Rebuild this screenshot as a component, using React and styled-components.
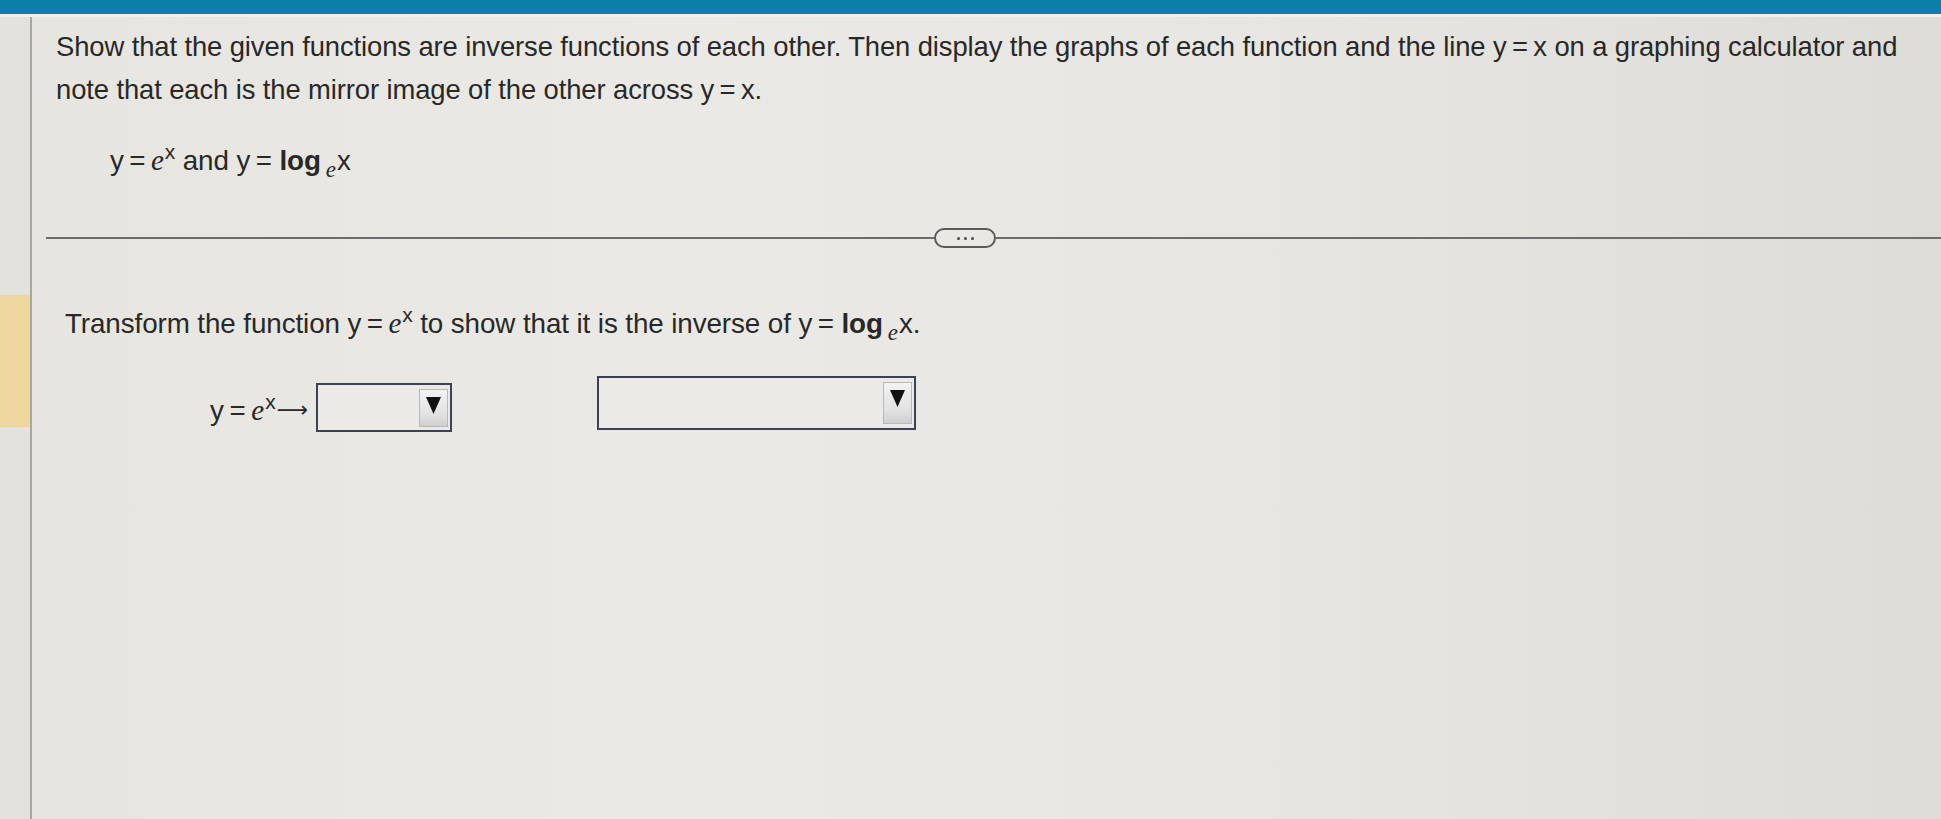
import React from "react";
import styled, { createGlobalStyle } from "styled-components";

const Global = createGlobalStyle`
  html, body { margin: 0; padding: 0; }
  body {
    font-family: "Liberation Sans", Arial, sans-serif;
    color: #282828;
    background: #e8e6e1;
  }
`;

const Page = styled.div`
  width: 1941px;
  height: 819px;
  overflow: hidden;
  display: flex;
  flex-direction: column;
  background: linear-gradient(90deg, #e7e5e0 0%, #ebe9e5 35%, #e8e6e2 65%, #dedcd7 100%);
`;

const TopBar = styled.div`
  height: 14px;
  flex: none;
  background: #0b7fa6;
  border-bottom: 3px solid #eef0ef;
`;

const Body = styled.div`
  flex: 1;
  display: flex;
`;

const Rail = styled.div`
  width: 30px;
  flex: none;
  border-right: 2px solid #a8a6a1;
  background: #e4e2dd;
  display: flex;
  flex-direction: column;
`;

const Marker = styled.div`
  margin-top: ${(p) => p.$top}px;
  height: ${(p) => p.$height}px;
  background: #eed79c;
`;

const Content = styled.div`
  flex: 1;
  display: flex;
  flex-direction: column;
  padding: 8px 0 0 14px;
`;

const Para = styled.p`
  margin: ${(p) => p.$mt || 0}px 0 0 ${(p) => p.$indent || 0}px;
  max-width: ${(p) => (p.$max ? p.$max + "px" : "none")};
  font-size: ${(p) => p.$size || 27.8}px;
  line-height: 43px;
  letter-spacing: -0.1px;
`;

const E = styled.i`
  font-family: "Liberation Serif", "Times New Roman", serif;
  font-size: 29px;
`;

const Sup = styled.sup`
  font-size: 21px;
  vertical-align: 11px;
  line-height: 0;
  margin-left: 1px;
`;

const Log = styled.b`
  font-weight: 700;
`;

const Sub = styled.sub`
  font-family: "Liberation Serif", "Times New Roman", serif;
  font-style: italic;
  font-size: 23px;
  vertical-align: -7px;
  line-height: 0;
  margin: 0 1px 0 5px;
`;

const DividerRow = styled.div`
  margin-top: ${(p) => p.$mt}px;
  display: flex;
  align-items: center;
`;

const Rule = styled.div`
  height: 0;
  border-top: 2px solid #6c6c6c;
  flex: ${(p) => (p.$grow ? 1 : "none")};
  width: ${(p) => (p.$w ? p.$w + "px" : "auto")};
`;

const Pill = styled.div`
  width: 58px;
  height: 16px;
  border: 2px solid #5a5a5a;
  border-radius: 10px;
  display: flex;
  align-items: center;
  justify-content: center;
  gap: 4px;
`;

const Dot = styled.span`
  width: 3px;
  height: 3px;
  border-radius: 50%;
  background: #4a4a4a;
`;

const AnswerRow = styled.div`
  margin: 28px 0 0 164px;
  display: flex;
  align-items: center;
  font-size: 27.8px;
`;

const Lhs = styled.span`
  margin-right: 8px;
  padding-top: 16px;
  white-space: nowrap;
`;

const Arrow = styled.span`
  font-family: "DejaVu Sans", sans-serif;
  font-size: 22px;
  margin-left: 1px;
  position: relative;
  top: -3px;
`;

const Dropdown = styled.div`
  width: ${(p) => p.$w}px;
  height: ${(p) => p.$h}px;
  box-sizing: border-box;
  border: 2px solid #3d4156;
  background: #eceae6;
  display: flex;
  align-items: center;
  justify-content: flex-end;
  padding-right: 2px;
  margin-right: ${(p) => p.$mr || 0}px;
  margin-top: ${(p) => p.$mt || 0}px;
`;

const DropButton = styled.div`
  width: 29px;
  height: ${(p) => p.$h || 40}px;
  box-sizing: border-box;
  border: 1px solid #b9b9b9;
  background: linear-gradient(180deg, #f3f3f3 0%, #e1e1e1 70%, #cfcfcf 100%);
  display: flex;
  align-items: flex-start;
  justify-content: center;
  padding-top: 6px;
`;

const Caret = () => (
  <svg width="17" height="19" viewBox="0 0 17 19">
    <path d="M1 1 H16 L8.5 18 Z" fill="#111" />
  </svg>
);

const EX = () => (
  <>
    y{"\u2009"}={"\u2009"}
    <E>e</E>
    <Sup>x</Sup>
  </>
);

const LogE = () => (
  <>
    y{"\u2009"}= <Log>log</Log>
    <Sub>e</Sub>x
  </>
);

export default function App() {
  return (
    <>
      <Global />
      <Page>
        <TopBar />
        <Body>
          <Rail>
            <Marker $top={278} $height={132} />
          </Rail>
          <Content>
            <Para $indent={10} $max={1880} $size={27.4}>
              Show that the given functions are inverse functions of each other. Then display the graphs of each
              function and the line y{"\u2009"}={"\u2009"}x on a graphing calculator and note that each is the mirror
              image of the other across y{"\u2009"}={"\u2009"}x.
            </Para>
            <Para $indent={64} $mt={28}>
              <EX /> and <LogE />
            </Para>
            <DividerRow $mt={46}>
              <Rule $w={888} />
              <Pill>
                <Dot />
                <Dot />
                <Dot />
              </Pill>
              <Rule $grow />
            </DividerRow>
            <Para $indent={19} $mt={54}>
              Transform the function <EX /> to show that it is the inverse of <LogE />.
            </Para>
            <AnswerRow>
              <Lhs>
                <EX />
                <Arrow>⟶</Arrow>
              </Lhs>
              <Dropdown $w={136} $h={49} $mr={145} $mt={10}>
                <DropButton $h={38}>
                  <Caret />
                </DropButton>
              </Dropdown>
              <Dropdown $w={319} $h={54}>
                <DropButton $h={42}>
                  <Caret />
                </DropButton>
              </Dropdown>
            </AnswerRow>
          </Content>
        </Body>
      </Page>
    </>
  );
}
